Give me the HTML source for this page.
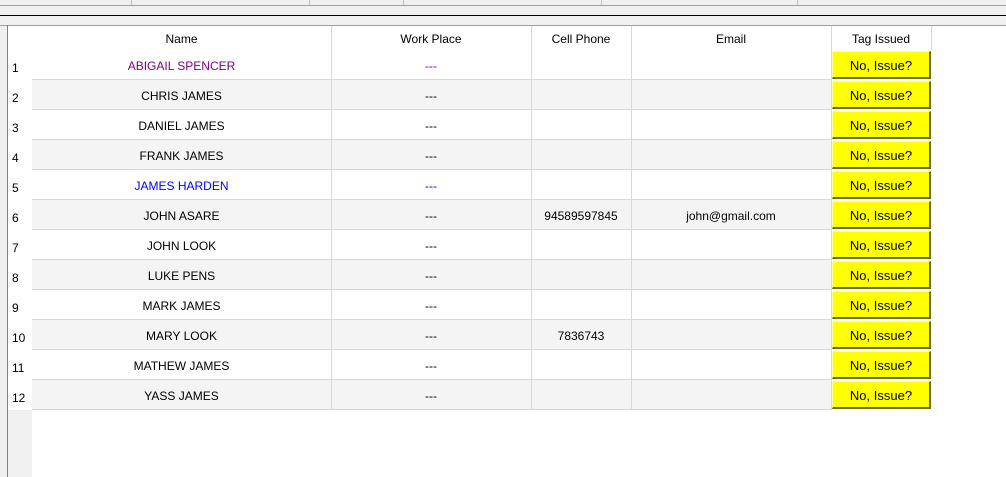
<!DOCTYPE html>
<html><head><meta charset="utf-8"><style>
*{margin:0;padding:0;box-sizing:border-box}
body{width:1006px;height:477px;background:#f0f0f0;position:relative;overflow:hidden;font-family:"Liberation Sans",sans-serif;font-size:12px;color:#000}
.a{position:absolute}
.c{position:absolute;display:flex;align-items:center;justify-content:center;white-space:nowrap;padding-top:2px}
.btn{position:absolute;background:#ffff00;border-right:2px solid #6b6b00;border-bottom:2px solid #6b6b00;border-top:1px solid #ffffa0;border-left:1px solid #ffffa0;display:flex;align-items:center;justify-content:center;font-size:13px;padding-top:2px}
</style></head><body>
<div class="a" style="left:0;top:5px;width:1006px;height:1px;background:#a0a0a0"></div>
<div class="a" style="left:131px;top:0;width:1px;height:5px;background:#c0c0c0"></div>
<div class="a" style="left:309px;top:0;width:1px;height:5px;background:#c0c0c0"></div>
<div class="a" style="left:403px;top:0;width:1px;height:5px;background:#c0c0c0"></div>
<div class="a" style="left:601px;top:0;width:1px;height:5px;background:#c0c0c0"></div>
<div class="a" style="left:797px;top:0;width:1px;height:5px;background:#c0c0c0"></div>
<div class="a" style="left:0;top:15px;width:1006px;height:1px;background:#000"></div>
<div class="a" style="left:0;top:25px;width:1006px;height:1px;background:#a0a0a0"></div>
<div class="a" style="left:7px;top:25px;width:1px;height:452px;background:#808080"></div>
<div class="a" style="left:32px;top:26px;width:974px;height:451px;background:#fff"></div>
<div id="g"></div>
<script>
var names=["ABIGAIL SPENCER","CHRIS JAMES","DANIEL JAMES","FRANK JAMES","JAMES HARDEN","JOHN ASARE","JOHN LOOK","LUKE PENS","MARK JAMES","MARY LOOK","MATHEW JAMES","YASS JAMES"];
var cols=[[32,331],[331,531],[531,631],[631,831],[831,931]];
var h='';
var hd=["Name","Work Place","Cell Phone","Email","Tag Issued"];
h+='<div class="a" style="left:8px;top:26px;width:24px;height:24px;background:#fff"></div>';
for(var j=0;j<5;j++){h+='<div class="c" style="left:'+cols[j][0]+'px;top:26px;width:'+(cols[j][1]-cols[j][0])+'px;height:24px">'+hd[j]+'</div>';}
for(var i=0;i<12;i++){var y=50+i*30;var bg=i%2?'#f4f4f4':'#fff';
var col=i==0?'#800080':(i==4?'#0000ff':'#000');
h+='<div class="a" style="left:8px;top:'+y+'px;width:24px;height:30px;background:#fff"></div>';
h+='<div class="a" style="left:12px;top:'+(y+11)+'px;font-size:12px">'+(i+1)+'</div>';
h+='<div class="a" style="left:32px;top:'+y+'px;width:799px;height:30px;background:'+bg+';border-bottom:1px solid #d8d8d8"></div>';
h+='<div class="c" style="left:32px;top:'+y+'px;width:299px;height:29px;color:'+col+'">'+names[i]+'</div>';
h+='<div class="c" style="left:331px;top:'+y+'px;width:200px;height:29px;color:'+col+'">---</div>';
if(i==5){h+='<div class="c" style="left:531px;top:'+y+'px;width:100px;height:29px">94589597845</div><div class="c" style="left:631px;top:'+y+'px;width:200px;height:29px">john@gmail.com</div>';}
if(i==9){h+='<div class="c" style="left:531px;top:'+y+'px;width:100px;height:29px">7836743</div>';}
h+='<div class="btn" style="left:832px;top:'+(y+1)+'px;width:99px;height:28px">No, Issue?</div>';}
for(var j=0;j<5;j++)h+='<div class="a" style="left:'+cols[j][1]+'px;top:26px;width:1px;height:'+(j==4?24:384)+'px;background:#d8d8d8"></div>';
document.getElementById('g').innerHTML=h;
</script>
</body></html>
